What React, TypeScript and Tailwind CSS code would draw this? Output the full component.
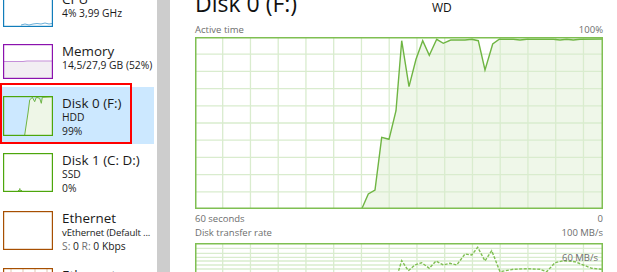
import React from "react";

const FONT = "font-['Segoe_UI','Open_Sans',sans-serif]";

// chart geometry: 408 x 172 px box, 10 rows, columns every ~27.75px
const CHART_W = 408;
const CHART_H = 172;
const COLS = Array.from({ length: 14 }, (_, i) => 27.7 + i * 27.75);
const ROWS = Array.from({ length: 9 }, (_, i) => (i + 1) * 17.2);

const activePts: [number, number][] = [
  [0, 172], [166.7, 172], [173.3, 157], [180, 153], [186.7, 100.3], [194, 102.3],
  [201, 73.7], [206.7, 3.7], [214, 49.7], [221, 22.3], [227.7, 3.7], [234.3, 18.3],
  [241.7, 2.3], [248.3, 6.3], [255.7, 3], [270, 3], [276.7, 2.3], [283.3, 3.7],
  [290, 33], [297.7, 7], [304.3, 2.3], [318.3, 2.3], [325, 3], [331.7, 2.3],
  [358.3, 2.3], [365, 3], [371.7, 2.3], [378.3, 3], [385, 2.3], [408, 2],
];

const transferPts: [number, number][] = [
  [198, 40], [203.3, 28.7], [206.7, 17.7], [213.3, 27.7], [220, 22], [226.7, 19.7],
  [234.3, 25.3], [241, 18], [248.3, 22], [255, 20.3], [261.7, 22], [270, 11],
  [276.7, 12], [282.7, 4.3], [290, 18], [296.7, 7.7], [305, 28.7], [318.3, 26.3],
  [331.7, 25.7], [345, 26.3], [351.7, 28.7], [360, 19.7], [368.3, 17.7], [380, 18.7],
  [388.3, 22], [396.7, 25.3], [406.7, 26.3],
];

const toStr = (pts: [number, number][]) => pts.map(([x, y]) => `${x},${y}`).join(" ");

function ActiveChart() {
  const fill = `0,172 ${toStr(activePts)} 408,172`;
  return (
    <svg width={CHART_W} height={CHART_H} className="block">
      <polygon points={fill} fill="#eff7e9" />
      {COLS.map((x) => (
        <line key={x} x1={x} x2={x} y1={0} y2={CHART_H} stroke="#d9ecce" strokeWidth={1.3} />
      ))}
      {ROWS.map((y) => (
        <line key={y} x1={0} x2={CHART_W} y1={y} y2={y} stroke="#d9ecce" strokeWidth={1.3} />
      ))}
      <polyline points={toStr(activePts)} fill="none" stroke="#6fb543" strokeWidth={1.4} />
      <rect x={0.75} y={0.75} width={CHART_W - 1.5} height={CHART_H - 1.5} fill="none" stroke="#7fbf52" strokeWidth={1.5} />
    </svg>
  );
}

function TransferChart() {
  const rows = [5.3, 10.3, 14.3, 18, 22, 26];
  return (
    <div className="relative h-[172px]">
      <svg width={CHART_W} height={CHART_H} className="block">
        {COLS.map((x) => (
          <line key={x} x1={x} x2={x} y1={0} y2={CHART_H} stroke="#d9ecce" strokeWidth={1.3} />
        ))}
        {rows.map((y) => (
          <line key={y} x1={0} x2={CHART_W} y1={y} y2={y} stroke="#d9ecce" strokeWidth={1.3} />
        ))}
        <polyline
          points={toStr(transferPts)}
          fill="none"
          stroke="#7fbf52"
          strokeWidth={1.4}
          strokeDasharray="3 1.5"
        />
        <rect x={0.75} y={0.75} width={CHART_W - 1.5} height={CHART_H - 1.5} fill="none" stroke="#7fbf52" strokeWidth={1.5} />
      </svg>
      <div className="absolute right-[5px] top-[8px] text-[9.5px] leading-[14px] text-[#6d6d6d]">60 MB/s</div>
    </div>
  );
}

function Thumb({ color, h = 40, children }: { color: string; h?: number; children?: React.ReactNode }) {
  return (
    <svg width={50} height={h} className="block shrink-0">
      {children}
      <rect x={0.6} y={0.6} width={48.8} height={h - 1.2} fill="none" stroke={color} strokeWidth={1.2} />
    </svg>
  );
}

function Item({
  height,
  boxH = 40,
  color,
  title,
  lines,
  selected,
  thumb,
}: {
  height: number;
  boxH?: number;
  color: string;
  title: string;
  lines: React.ReactNode[];
  selected?: boolean;
  thumb?: React.ReactNode;
}) {
  return (
    <div
      className={`relative flex w-[154px] items-start pl-[3px] pt-[9px] ${selected ? "bg-[#cce8ff]" : ""}`}
      style={{ height }}
    >
      <Thumb color={color} h={boxH}>
        {thumb}
      </Thumb>
      <div className="ml-[9px] min-w-0 whitespace-nowrap">
        <div className="text-[13.4px] leading-[15px] text-[#1a1a1a]">{title}</div>
        {lines.map((l, i) => (
          <div key={i} className="text-[10.3px] leading-[13.5px] text-[#1a1a1a]">
            {l}
          </div>
        ))}
      </div>
      {selected && (
        <div className="absolute left-0 top-[-4px] h-[61px] w-[132px] border-[2.5px] border-[#ff0000]" />
      )}
    </div>
  );
}

function Sidebar() {
  return (
    <aside className="w-[157px] shrink-0 overflow-hidden">
      <div className="-mt-[17px]">
        <Item
          height={52}
          boxH={35}
          color="#117dbb"
          title="CPU"
          lines={["4%  3,99 GHz"]}
          thumb={
            <polyline
              points="18,33 22,32 26,33 30,32 34,31.5 38,32 42,31 46,32 49,31.5"
              fill="none"
              stroke="#6aaed8"
              strokeWidth={1}
            />
          }
        />
        <Item
          height={52}
          boxH={35}
          color="#8b12ae"
          title="Memory"
          lines={["14,5/27,9 GB (52%)"]}
          thumb={
            <>
              <rect x={0} y={17} width={50} height={18} fill="#f2eef3" />
              <polyline points="0,17.5 20,17.5 24,17 50,17" fill="none" stroke="#c58fd9" strokeWidth={1} />
            </>
          }
        />
        <Item
          height={57}
          color="#4da60c"
          title="Disk 0 (F:)"
          lines={["HDD", "99%"]}
          selected
          thumb={
            <>
              <polygon
                points="21.7,40 25,17 26.7,4 29.3,1.3 31.7,5.7 33.3,1.3 36.7,2.3 38.3,7.3 39.3,1.3 50,0.7 50,40"
                fill="#eef6e7"
              />
              <polyline
                points="21.7,39 25,17 26.7,4 29.3,1.3 31.7,5.7 33.3,1.3 36.7,2.3 38.3,7.3 39.3,1.3 50,0.7"
                fill="none"
                stroke="#6fb543"
                strokeWidth={1}
              />
            </>
          }
        />
        <Item
          height={58}
          boxH={39}
          color="#4da60c"
          title="Disk 1 (C: D:)"
          lines={["SSD", "0%"]}
          thumb={<polyline points="15,37.5 16.5,37.5 16.8,35.5 17.2,37.5 19,37.5" fill="none" stroke="#6fb543" strokeWidth={1} />}
        />
        <Item
          height={57}
          boxH={39}
          color="#a74f01"
          title="Ethernet"
          lines={[
            <span key="v" className="text-[9.6px] tracking-[-0.15px]">vEthernet (Default ...</span>,
            <span key="s">
              <span className="text-[#707070]">S:</span> 0 <span className="text-[#707070]">R:</span> 0 Kbps
            </span>,
          ]}
        />
        <Item
          height={57}
          boxH={39}
          color="#a74f01"
          title="Ethernet"
          lines={[]}
          thumb={
            <>
              {[8, 20, 32, 44].map((x) => (
                <line key={x} x1={x} x2={x} y1={0} y2={39} stroke="#e2c7b0" strokeWidth={1} />
              ))}
            </>
          }
        />
      </div>
    </aside>
  );
}

export default function App() {
  return (
    <div className={`flex h-[272px] w-[617px] overflow-hidden bg-white ${FONT}`}>
      <Sidebar />
      <div className="w-[13px] shrink-0 bg-[#cdcdcd]" />
      <main className="flex-1 pl-[25px] pr-[14px]">
        <div className="flex h-[23px] items-start">
          <div className="-mt-[10px] w-[237px] shrink-0 whitespace-nowrap text-[23px] leading-[26px] text-[#111]">
            Disk 0 (F:)
          </div>
          <div className="mt-[2px] text-[12px] leading-[12px] text-[#111]">WD</div>
        </div>
        <div className="flex h-[14px] justify-between text-[9.5px] leading-[14px] text-[#6d6d6d]">
          <span>Active time</span>
          <span>100%</span>
        </div>
        <ActiveChart />
        <div className="mt-[3px] flex h-[14px] justify-between text-[9.5px] leading-[14px] text-[#6d6d6d]">
          <span>60 seconds</span>
          <span>0</span>
        </div>
        <div className="flex h-[14px] justify-between text-[9.5px] leading-[14px] text-[#6d6d6d]">
          <span>Disk transfer rate</span>
          <span>100 MB/s</span>
        </div>
        <div className="mt-[3px]">
          <TransferChart />
        </div>
      </main>
    </div>
  );
}
